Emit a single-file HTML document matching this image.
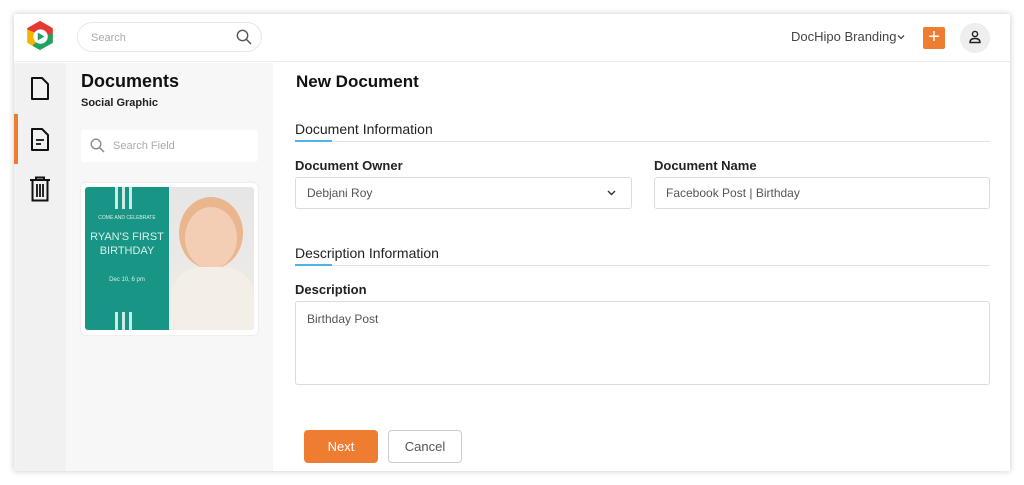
<!DOCTYPE html>
<html><head><style>
*{box-sizing:border-box;margin:0;padding:0}
body{width:1024px;height:485px;background:#fff;font-family:"Liberation Sans",sans-serif;position:relative;overflow:hidden;color:#222}
.app{position:absolute;left:14px;top:14px;width:996px;height:457px;background:#fff;box-shadow:0 0 6px rgba(0,0,0,.22)}
.hdr{position:absolute;left:0;top:0;width:996px;height:48px;border-bottom:1px solid #ececec;background:#fff}
.side{position:absolute;left:0;top:49px;width:52px;height:408px;background:#f1f1f1}
.panel{position:absolute;left:52px;top:49px;width:207px;height:408px;background:#f7f7f7}
.abs{position:absolute}
.inp{position:absolute;border:1px solid #dcdcdc;border-radius:3px;background:#fff;font-size:12px;color:#555;padding-left:11px;display:flex;align-items:center}
.lbl{position:absolute;font-size:13px;font-weight:bold;color:#222}
.sec{position:absolute;font-size:14px;color:#222}
</style></head><body>
<div class="app">
 <div class="hdr">
  <svg class="abs" style="left:11px;top:7px" width="30" height="30" viewBox="0 0 27 27">
   <path d="M13.5 1 L24 7 L24 19 L13.5 25 L3 19 L3 7Z" fill="#f4b400" stroke="#f4b400" stroke-width="2" stroke-linejoin="round"/>
   <path d="M13.5 1 L24 7 L24 14 L8 9 L3 7Z" fill="#e53935" stroke="#e53935" stroke-width="2" stroke-linejoin="round"/>
   <path d="M24 12 L24 19 L13.5 25 L8 22Z" fill="#1ea362" stroke="#1ea362" stroke-width="2" stroke-linejoin="round"/>
   <circle cx="14" cy="14" r="6.5" fill="#fff"/>
   <path d="M11.5 10.5 L17.5 14 L11.5 17.5Z" fill="#1ea362"/>
  </svg>
  <div class="abs" style="left:63px;top:8px;width:185px;height:30px;border:1px solid #e8e8e8;border-radius:15px;font-size:11px;color:#aaa;padding:9px 0 0 13px">Search</div>
  <svg class="abs" style="left:222px;top:15px" width="16" height="16" viewBox="0 0 16 16"><circle cx="6.5" cy="6.5" r="5.2" fill="none" stroke="#555" stroke-width="1.4"/><path d="M10.5 10.5L15 15" stroke="#555" stroke-width="1.5"/></svg>
  <div class="abs" style="left:777px;top:15px;font-size:13px;color:#444">DocHipo Branding</div>
  <svg class="abs" style="left:883px;top:20px" width="8" height="6" viewBox="0 0 8 6"><path d="M1 1.5L4 4.5L7 1.5" fill="none" stroke="#444" stroke-width="1.3"/></svg>
  <div class="abs" style="left:909px;top:13px;width:22px;height:22px;background:#ef7d31;border-radius:2px;color:#fff;font-size:20px;line-height:21px;text-align:center">+</div>
  <div class="abs" style="left:946px;top:9px;width:30px;height:30px;border-radius:50%;background:#eee"></div>
  <svg class="abs" style="left:954px;top:16px" width="14" height="14" viewBox="0 0 14 14"><circle cx="7" cy="4" r="2.6" fill="none" stroke="#222" stroke-width="1.4"/><path d="M2 12.5 Q2 8.5 7 8.5 Q12 8.5 12 12.5Z" fill="none" stroke="#222" stroke-width="1.4"/></svg>
 </div>
 <div class="side">
  <svg class="abs" style="left:16px;top:13px" width="20" height="25" viewBox="0 0 20 25"><path d="M2 2 H12 L18 8 V23 H2Z" fill="none" stroke="#111" stroke-width="2" stroke-linejoin="round"/></svg>
  <div class="abs" style="left:0;top:51px;width:4px;height:50px;background:#ef7d31"></div>
  <svg class="abs" style="left:16px;top:64px" width="20" height="25" viewBox="0 0 20 25"><path d="M2 2 H12 L18 8 V23 H2Z" fill="none" stroke="#111" stroke-width="2" stroke-linejoin="round"/><path d="M6 13H14M6 17H11" stroke="#111" stroke-width="1.8"/></svg>
  <svg class="abs" style="left:15px;top:113px" width="22" height="26" viewBox="0 0 22 26"><path d="M1 4H21M7 4V1.5H15V4M3.5 4.5V24.5H18.5V4.5" fill="none" stroke="#111" stroke-width="2"/><path d="M8 8V21M11 8V21M14 8V21" stroke="#111" stroke-width="1.8"/></svg>
 </div>
 <div class="panel">
  <div class="abs" style="left:15px;top:8px;font-size:18px;font-weight:bold;color:#111">Documents</div>
  <div class="abs" style="left:15px;top:34px;font-size:11px;font-weight:bold;color:#222">Social Graphic</div>
  <div class="abs" style="left:15px;top:67px;width:177px;height:32px;background:#fff;border-radius:3px;font-size:11px;color:#aaa;padding:10px 0 0 32px">Search Field</div>
  <svg class="abs" style="left:24px;top:75px" width="15" height="15" viewBox="0 0 15 15"><circle cx="6" cy="6" r="4.8" fill="none" stroke="#888" stroke-width="1.3"/><path d="M9.5 9.5L14 14" stroke="#888" stroke-width="1.4"/></svg>
  <div class="abs" style="left:15px;top:120px;width:177px;height:152px;background:#fff;border-radius:5px;box-shadow:0 0 2px rgba(0,0,0,.12)">
   <div class="abs" style="left:4px;top:4px;width:84px;height:143px;background:#189584;border-radius:3px 0 0 3px;color:#d8f0ec;text-align:center">
    <div class="abs" style="left:30px;top:0;width:3px;height:22px;background:#cfe9e5"></div><div class="abs" style="left:37px;top:0;width:3px;height:22px;background:#cfe9e5"></div><div class="abs" style="left:44px;top:0;width:3px;height:22px;background:#cfe9e5"></div>
    <div class="abs" style="left:0;top:28px;width:84px;font-size:5px">COME AND CELEBRATE</div>
    <div class="abs" style="left:0;top:43px;width:84px;font-size:11px;line-height:14px">RYAN'S FIRST<br>BIRTHDAY</div>
    <div class="abs" style="left:0;top:90px;width:84px;font-size:6px">Dec 10, 6 pm</div>
    <div class="abs" style="left:30px;top:125px;width:3px;height:18px;background:#cfe9e5"></div><div class="abs" style="left:37px;top:125px;width:3px;height:18px;background:#cfe9e5"></div><div class="abs" style="left:44px;top:125px;width:3px;height:18px;background:#cfe9e5"></div>
   </div>
   <div class="abs" style="left:88px;top:4px;width:85px;height:143px;background:linear-gradient(#e6e6e6,#f0ece8);border-radius:0 3px 3px 0;overflow:hidden">
    <div class="abs" style="left:10px;top:10px;width:64px;height:72px;border-radius:50%;background:#e9b68e"></div>
    <div class="abs" style="left:16px;top:20px;width:52px;height:62px;border-radius:50%;background:#f4cdb5"></div>
    <div class="abs" style="left:2px;top:80px;width:83px;height:70px;border-radius:30px 30px 0 0;background:#f3efe6"></div>
   </div>
  </div>
 </div>
 <div class="abs" style="left:282px;top:58px;font-size:17px;font-weight:bold;color:#111">New Document</div>
 <div class="sec" style="left:281px;top:107px">Document Information</div>
 <div class="abs" style="left:281px;top:127px;width:695px;height:1px;background:#e2e2e2"></div>
 <div class="abs" style="left:281px;top:126px;width:37px;height:2px;background:#4fb3e8"></div>
 <div class="lbl" style="left:281px;top:144px">Document Owner</div>
 <div class="inp" style="left:281px;top:163px;width:337px;height:32px">Debjani Roy<svg style="position:absolute;right:15px;top:12px" width="9" height="6" viewBox="0 0 9 6"><path d="M1 1L4.5 4.5L8 1" fill="none" stroke="#333" stroke-width="1.4"/></svg></div>
 <div class="lbl" style="left:640px;top:144px">Document Name</div>
 <div class="inp" style="left:640px;top:163px;width:336px;height:32px">Facebook Post | Birthday</div>
 <div class="sec" style="left:281px;top:231px">Description Information</div>
 <div class="abs" style="left:281px;top:251px;width:695px;height:1px;background:#e2e2e2"></div>
 <div class="abs" style="left:281px;top:250px;width:37px;height:2px;background:#4fb3e8"></div>
 <div class="lbl" style="left:281px;top:268px">Description</div>
 <div class="inp" style="left:281px;top:287px;width:695px;height:84px;align-items:flex-start;padding-top:10px">Birthday Post</div>
 <div class="abs" style="left:290px;top:416px;width:74px;height:33px;background:#ef7d31;border-radius:4px;color:#fff;font-size:13px;text-align:center;line-height:33px">Next</div>
 <div class="abs" style="left:374px;top:416px;width:74px;height:33px;border:1px solid #ccc;border-radius:4px;color:#555;font-size:13px;text-align:center;line-height:31px">Cancel</div>
</div>
</body></html>
